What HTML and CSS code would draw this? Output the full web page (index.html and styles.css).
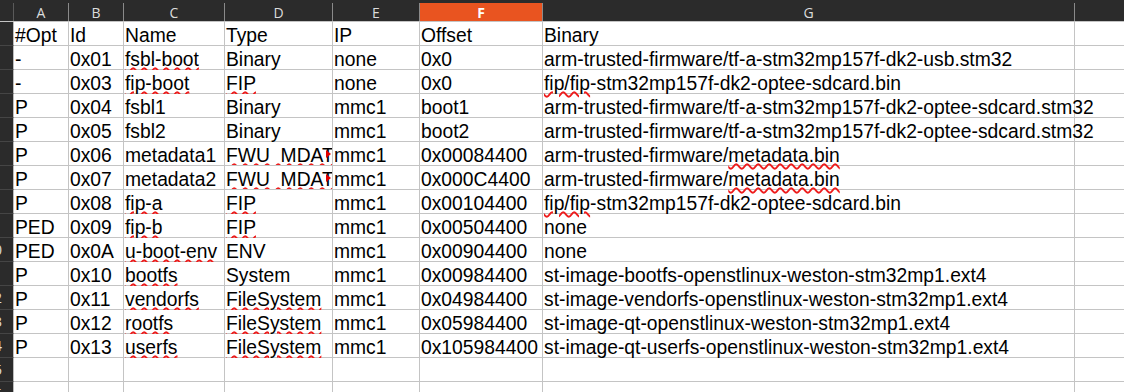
FILE: index.html
```html
<!DOCTYPE html>
<html>
<head>
<meta charset="utf-8">
<link rel="stylesheet" href="styles.css">
</head>
<body>
<div class="sheet">
  <div class="ch corner"><b></b></div>
  <div class="ch"><b>A</b></div>
  <div class="ch"><b>B</b></div>
  <div class="ch"><b>C</b></div>
  <div class="ch"><b>D</b></div>
  <div class="ch"><b>E</b></div>
  <div class="ch sel"><b>F</b></div>
  <div class="ch"><b>G</b></div>
  <div class="ch last"><b></b></div>

  <div class="rh"><span>1</span></div><div class="c">#Opt</div><div class="c">Id</div><div class="c">Name</div><div class="c">Type</div><div class="c">IP</div><div class="c">Offset</div><div class="c g">Binary</div><div class="c h"></div>

  <div class="rh"><span>2</span></div><div class="c">-</div><div class="c">0x01</div><div class="c"><span class="sp">fsbl-boot</span></div><div class="c">Binary</div><div class="c">none</div><div class="c">0x0</div><div class="c g">arm-trusted-firmware/tf-a-stm32mp157f-dk2-usb.stm32</div><div class="c h"></div>

  <div class="rh"><span>3</span></div><div class="c">-</div><div class="c">0x03</div><div class="c"><span class="sp">fip-boot</span></div><div class="c"><span class="sp">FIP</span></div><div class="c">none</div><div class="c">0x0</div><div class="c g"><span class="sp">fip/fip</span>-stm32mp157f-dk2-optee-sdcard.bin</div><div class="c h"></div>

  <div class="rh"><span>4</span></div><div class="c">P</div><div class="c">0x04</div><div class="c">fsbl1</div><div class="c">Binary</div><div class="c">mmc1</div><div class="c">boot1</div><div class="c g">arm-trusted-firmware/tf-a-stm32mp157f-dk2-optee-sdcard.stm32</div><div class="c h"></div>

  <div class="rh"><span>5</span></div><div class="c">P</div><div class="c">0x05</div><div class="c">fsbl2</div><div class="c">Binary</div><div class="c">mmc1</div><div class="c">boot2</div><div class="c g">arm-trusted-firmware/tf-a-stm32mp157f-dk2-optee-sdcard.stm32</div><div class="c h"></div>

  <div class="rh"><span>6</span></div><div class="c">P</div><div class="c">0x06</div><div class="c">metadata1</div><div class="c clip"><span class="sp">FWU_MDATA</span><i class="more"></i></div><div class="c">mmc1</div><div class="c">0x00084400</div><div class="c g">arm-trusted-firmware/<span class="sp">metadata.bin</span></div><div class="c h"></div>

  <div class="rh"><span>7</span></div><div class="c">P</div><div class="c">0x07</div><div class="c">metadata2</div><div class="c clip"><span class="sp">FWU_MDATA</span><i class="more"></i></div><div class="c">mmc1</div><div class="c">0x000C4400</div><div class="c g">arm-trusted-firmware/<span class="sp">metadata.bin</span></div><div class="c h"></div>

  <div class="rh"><span>8</span></div><div class="c">P</div><div class="c">0x08</div><div class="c"><span class="sp">fip-a</span></div><div class="c"><span class="sp">FIP</span></div><div class="c">mmc1</div><div class="c">0x00104400</div><div class="c g"><span class="sp">fip/fip</span>-stm32mp157f-dk2-optee-sdcard.bin</div><div class="c h"></div>

  <div class="rh"><span>9</span></div><div class="c">PED</div><div class="c">0x09</div><div class="c"><span class="sp">fip-b</span></div><div class="c"><span class="sp">FIP</span></div><div class="c">mmc1</div><div class="c">0x00504400</div><div class="c g">none</div><div class="c h"></div>

  <div class="rh"><span>10</span></div><div class="c">PED</div><div class="c">0x0A</div><div class="c"><span class="sp">u-boot-env</span></div><div class="c">ENV</div><div class="c">mmc1</div><div class="c">0x00904400</div><div class="c g">none</div><div class="c h"></div>

  <div class="rh"><span>11</span></div><div class="c">P</div><div class="c">0x10</div><div class="c"><span class="sp">bootfs</span></div><div class="c">System</div><div class="c">mmc1</div><div class="c">0x00984400</div><div class="c g">st-image-bootfs-openstlinux-weston-stm32mp1.ext4</div><div class="c h"></div>

  <div class="rh"><span>12</span></div><div class="c">P</div><div class="c">0x11</div><div class="c"><span class="sp">vendorfs</span></div><div class="c"><span class="sp">FileSystem</span></div><div class="c">mmc1</div><div class="c">0x04984400</div><div class="c g">st-image-vendorfs-openstlinux-weston-stm32mp1.ext4</div><div class="c h"></div>

  <div class="rh"><span>13</span></div><div class="c">P</div><div class="c">0x12</div><div class="c"><span class="sp">rootfs</span></div><div class="c"><span class="sp">FileSystem</span></div><div class="c">mmc1</div><div class="c">0x05984400</div><div class="c g">st-image-qt-openstlinux-weston-stm32mp1.ext4</div><div class="c h"></div>

  <div class="rh"><span>14</span></div><div class="c">P</div><div class="c">0x13</div><div class="c"><span class="sp">userfs</span></div><div class="c"><span class="sp">FileSystem</span></div><div class="c">mmc1</div><div class="c">0x105984400</div><div class="c g">st-image-qt-userfs-openstlinux-weston-stm32mp1.ext4</div><div class="c h"></div>

  <div class="rh"><span>15</span></div><div class="c"></div><div class="c"></div><div class="c"></div><div class="c"></div><div class="c"></div><div class="c"></div><div class="c g"></div><div class="c h"></div>

  <div class="rh"><span>16</span></div><div class="c"></div><div class="c"></div><div class="c"></div><div class="c"></div><div class="c"></div><div class="c"></div><div class="c g"></div><div class="c h"></div>
</div>
</body>
</html>
```

FILE: styles.css
```css
html, body {
  margin: 0;
  padding: 0;
  background: #ffffff;
  overflow: hidden;
}

.sheet {
  display: grid;
  grid-template-columns: 14px 55px 55px 101px 108px 87px 123px 532px 1fr;
  grid-template-rows: 22px;
  grid-auto-rows: 24px;
  width: 1124px;
  background: #ffffff;
  font-family: "Liberation Sans", Arial, sans-serif;
  font-size: 19.3px;
  color: #000;
}

.ch {
  background: #2b2b2b;
  padding-top: 3px;
  border-bottom: 1px solid #c4c4c4;
  box-sizing: border-box;
  height: 22px;
  display: flex;
}

.ch b {
  flex: 1;
  display: block;
  font-weight: normal;
  color: #dcdcdc;
  font-family: "Open Sans", "DejaVu Sans", sans-serif;
  font-size: 14px;
  text-align: center;
  line-height: 19px;
  border-right: 1px solid #8a8a8a;
}

.ch.corner b {
  border-right: 1px solid #5a5a5a;
}

.ch.sel b {
  background: #e95420;
  color: #ffffff;
  font-weight: bold;
}

.ch.last b {
  border-right: none;
}

.rh {
  background: #2b2b2b;
  border-right: 1px solid #bdbdbd;
  border-bottom: 1px solid #454545;
  overflow: hidden;
}

.rh span {
  display: block;
  width: 30px;
  margin-left: -21px;
  text-align: center;
  color: #e0e0e0;
  font-family: "Open Sans", "DejaVu Sans", sans-serif;
  font-size: 14px;
  line-height: 23px;
}

.c {
  background: #ffffff;
  border-right: 1px solid #c4c4c4;
  border-bottom: 1px solid #c4c4c4;
  padding: 4px 0 0 1px;
  line-height: 19px;
  white-space: nowrap;
  position: relative;
}

.c.g {
  z-index: 1;
  background: transparent;
}

.c.h {
  border-right: none;
}

.c.clip {
  overflow: hidden;
}

.more {
  position: absolute;
  right: 1px;
  top: 8px;
  width: 0;
  height: 0;
  border-top: 4px solid transparent;
  border-bottom: 4px solid transparent;
  border-left: 5px solid #e00000;
}

.sp {
  text-decoration-line: underline;
  text-decoration-style: wavy;
  text-decoration-color: #ee1c1c;
  text-decoration-thickness: 1.5px;
  text-underline-offset: 1px;
}
```
